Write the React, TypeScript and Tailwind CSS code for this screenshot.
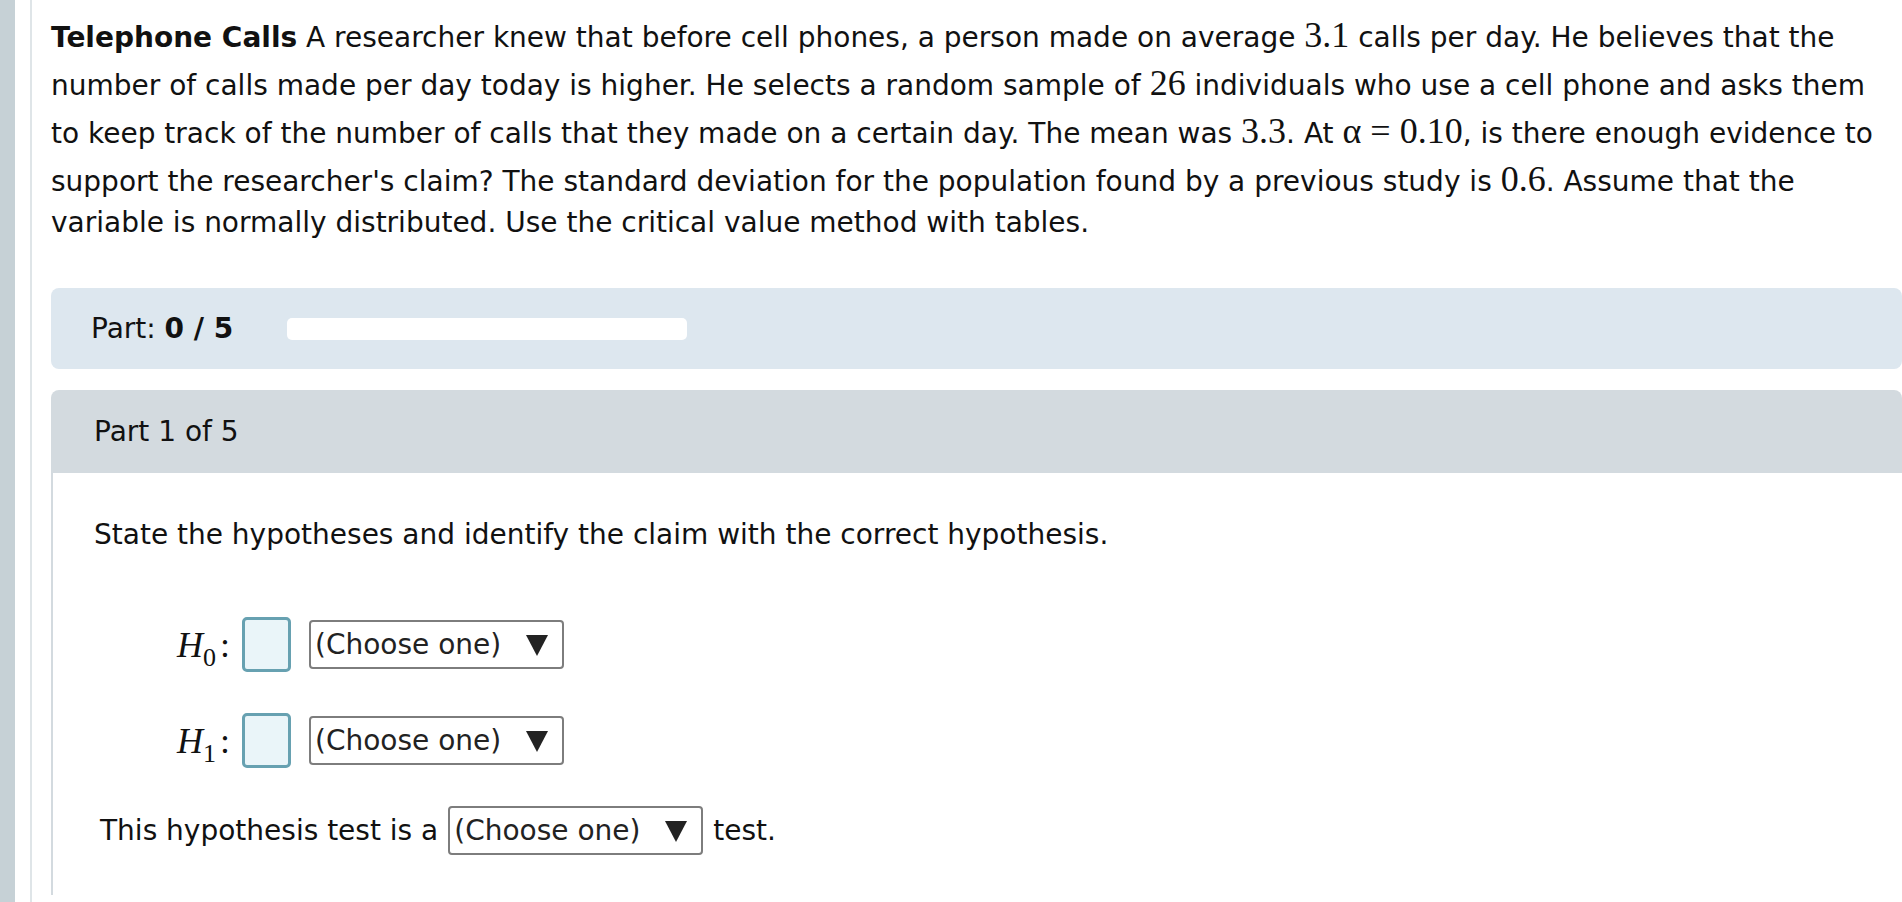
import React from 'react';

const sans = 'font-["DejaVu_Sans","Liberation_Sans",sans-serif]';

function M({ children }: { children: React.ReactNode }) {
  return <span className='font-["Liberation_Serif",serif] text-[36px] leading-none'>{children}</span>;
}

function Select() {
  return (
    <div className="flex h-[49px] w-[255px] items-center justify-between rounded-[4px] border-2 border-[#7d7d7d] bg-white pl-[4px] pr-[13px] text-[#222]">
      <span>(Choose one)</span>
      <svg width="24" height="24" viewBox="0 0 24 24">
        <path d="M1 2 L23 2 L12 23 Z" fill="#222" />
      </svg>
    </div>
  );
}

function AnswerBox() {
  return <div className="h-[55px] w-[49px] rounded-[5px] border-[3px] border-[#67a1b1] bg-[#eaf5f9]" />;
}

function Hyp({ sub }: { sub: string }) {
  return (
    <div className="flex items-center">
      <span className='flex w-[66px] items-baseline pl-[1px] font-["Liberation_Serif",serif] text-[36px] italic leading-none text-[#111]'>
        H<span className="relative top-[9px] not-italic text-[26px]">{sub}</span>
        <span className="not-italic pl-[4px]">:</span>
      </span>
      <AnswerBox />
      <div className="ml-[18px]">
        <Select />
      </div>
    </div>
  );
}

export default function App() {
  return (
    <div className={`flex min-h-screen bg-white text-[28px] text-[#111] ${sans}`}>
      <div className="w-[15px] shrink-0 bg-[#c6d1d6]" />
      <div className="w-[17px] shrink-0 border-r-2 border-[#dfe5e8]" />
      <div className="flex-1 pl-[19px]">
        <div className="pt-[14px] whitespace-nowrap">
          <div className="flex h-[48px] items-center">
            <span>
              <b>Telephone Calls</b> A researcher knew that before cell phones, a person made on average <M>3.1</M> calls per day. He believes that the
            </span>
          </div>
          <div className="flex h-[48px] items-center">
            <span>
              number of calls made per day today is higher. He selects a random sample of <M>26</M> individuals who use a cell phone and asks them
            </span>
          </div>
          <div className="flex h-[48px] items-center">
            <span>
              to keep track of the number of calls that they made on a certain day. The mean was <M>3.3</M>. At <M>α</M>
              <M>{' = '}</M>
              <M>0.10</M>, is there enough evidence to
            </span>
          </div>
          <div className="flex h-[48px] items-center">
            <span>
              support the researcher's claim? The standard deviation for the population found by a previous study is <M>0.6</M>. Assume that the
            </span>
          </div>
          <div className="flex h-[34px] items-center">
            <span>variable is normally distributed. Use the critical value method with tables.</span>
          </div>
        </div>

        <div className="mt-[48px] flex h-[81px] items-center rounded-[8px] bg-[#dde7ef] pl-[40px]">
          <span>
            Part: <b>0 / 5</b>
          </span>
          <div className="ml-[54px] h-[22px] w-[400px] rounded-[5px] bg-white" />
        </div>

        <div className="mt-[21px] flex h-[83px] items-center rounded-tl-[8px] rounded-tr-[8px] bg-[#d3dadf] pl-[43px]">
          Part 1 of 5
        </div>

        <div className="border-l-2 border-[#d3dadf] pb-[40px] pl-[41px]">
          <div className="pt-[41px]">State the hypotheses and identify the claim with the correct hypothesis.</div>
          <div className="mt-[61px] flex flex-col gap-[41px] pl-[82px]">
            <Hyp sub="0" />
            <Hyp sub="1" />
          </div>
          <div className="mt-[38px] flex items-center pl-[6px]">
            <span>This hypothesis test is a</span>
            <div className="ml-[10px]">
              <Select />
            </div>
            <span className="ml-[10px]">test.</span>
          </div>
        </div>
      </div>
    </div>
  );
}
